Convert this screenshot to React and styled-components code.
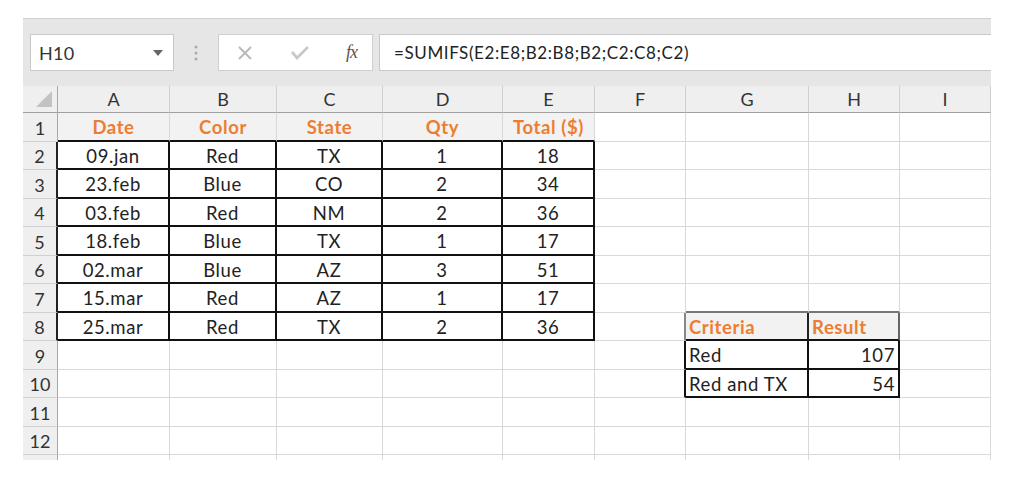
import styled, { createGlobalStyle } from 'styled-components'

const Global = createGlobalStyle`
    body {
        margin: 0;
        background: #fff;
        font-family: Lato, "Open Sans", sans-serif;
    }
`

const Page = styled.div`
    padding: 18px 0 0 23px;
`

const Sheet = styled.div`
    width: 968px;
    background: #e6e6e6;
    border-top: 1px solid #d0d0d0;
`

const Toolbar = styled.div`
    display: flex;
    align-items: center;
    height: 67px;
    padding: 0 0 0 7px;
`

const NameBox = styled.div`
    width: 144px;
    height: 37px;
    box-sizing: border-box;
    background: #fff;
    border: 1px solid #c9c9c9;
    display: flex;
    align-items: center;
    justify-content: space-between;
    padding: 0 10px 0 8px;
    font-size: 18px;
    letter-spacing: 0.3px;
    color: #333;
`

const Dots = styled.div`
    width: 44px;
    display: flex;
    justify-content: center;
`

const IconBox = styled.div`
    width: 155px;
    height: 37px;
    box-sizing: border-box;
    background: #fff;
    border: 1px solid #cfcfcf;
    display: flex;
    align-items: center;
    justify-content: space-between;
    padding: 0 15px 0 18px;
    margin-right: 6px;
`

const Fx = styled.span`
    font-family: "Liberation Serif", serif;
    font-style: italic;
    font-size: 18px;
    color: #555;
    letter-spacing: -1px;
`

const Formula = styled.div`
    flex: 1;
    height: 37px;
    box-sizing: border-box;
    background: #fff;
    border: 1px solid #c9c9c9;
    border-right: none;
    display: flex;
    align-items: center;
    padding-left: 14px;
    font-size: 17px;
    letter-spacing: 0.6px;
    color: #222;
`

const Grid = styled.div`
    display: grid;
    grid-template-columns: 35px 112px 107px 106px 120px 92px 91px 123px 91px 91px;
    grid-template-rows: 27px repeat(12, 28.5px) 5px;
    background: #fff;
`

const Cell = styled.div`
    box-sizing: border-box;
    display: flex;
    align-items: center;
    justify-content: ${p => p.$align || 'center'};
    padding: 2px 3px 0;
    font-size: 18.5px;
    letter-spacing: 0.6px;
    color: #222;
    white-space: nowrap;
    background: ${p => p.$fill || '#fff'};
    border-right: ${p => p.$r ? `2px solid ${p.$r}` : '1px solid #d9d9d9'};
    border-bottom: ${p => p.$b ? `2px solid ${p.$b}` : p.$last ? 'none' : '1px solid #d9d9d9'};
    font-weight: ${p => p.$bold ? 700 : 400};
    ${p => p.$bold && 'color: #ed7d31;'}
`

const HeadCell = styled.div`
    box-sizing: border-box;
    display: flex;
    align-items: center;
    justify-content: center;
    background: #efefef;
    font-size: 18px;
    color: #333;
    border-right: 1px solid ${p => p.$corner ? '#a8a8a8' : '#cfcfcf'};
    border-bottom: 1px solid #a0a0a0;
`

const RowHead = styled.div`
    box-sizing: border-box;
    display: flex;
    align-items: center;
    justify-content: center;
    padding-top: 2px;
    background: #efefef;
    font-size: 18px;
    color: #333;
    border-right: ${p => p.$dark ? '2px solid #222' : '1px solid #a8a8a8'};
    border-bottom: ${p => p.$last ? 'none' : '1px solid #d0d0d0'};
`

const Corner = styled(HeadCell)`
    align-items: flex-end;
    justify-content: flex-end;
    padding: 0 5px 5px 0;
`

const cols = ['A', 'B', 'C', 'D', 'E', 'F', 'G', 'H', 'I']

const table = [
    ['Date', 'Color', 'State', 'Qty', 'Total ($)'],
    ['09.jan', 'Red', 'TX', '1', '18'],
    ['23.feb', 'Blue', 'CO', '2', '34'],
    ['03.feb', 'Red', 'NM', '2', '36'],
    ['18.feb', 'Blue', 'TX', '1', '17'],
    ['02.mar', 'Blue', 'AZ', '3', '51'],
    ['15.mar', 'Red', 'AZ', '1', '17'],
    ['25.mar', 'Red', 'TX', '2', '36'],
]

const side = {
    8: ['Criteria', 'Result'],
    9: ['Red', '107'],
    10: ['Red and TX', '54'],
}

// border/fill rules for one cell, row is 1-based, col index 0..8
function cellProps(row, col) {
    const p = {}
    if (row === 1 && col < 5) {
        p.$fill = '#f2f2f2'
        p.$bold = true
        p.$b = '#111'
    }
    if (row >= 2 && row <= 8 && col < 5) {
        p.$r = '#111'
        p.$b = '#111'
    }
    if (row === 7 && (col === 6 || col === 7)) p.$b = '#777'
    if (col === 5 && row === 8) p.$r = '#888'
    if (col === 5 && (row === 9 || row === 10)) p.$r = '#111'
    if (row === 8 && (col === 6 || col === 7)) {
        p.$fill = '#f2f2f2'
        p.$bold = true
        p.$align = 'flex-start'
        p.$r = col === 6 ? '#222' : '#666'
        p.$b = '#111'
    }
    if ((row === 9 || row === 10) && (col === 6 || col === 7)) {
        p.$r = '#111'
        p.$b = '#111'
        p.$align = col === 6 ? 'flex-start' : 'flex-end'
    }
    return p
}

function cellText(row, col) {
    if (row <= 8 && col < 5) return table[row - 1][col]
    if (side[row] && (col === 6 || col === 7)) return side[row][col - 6]
    return ''
}

export default function App() {
    const rows = Array.from({ length: 13 }, (_, i) => i + 1)

    return (
        <Page>
            <Global />
            <Sheet>
                <Toolbar>
                    <NameBox>
                        H10
                        <svg width="10" height="6" viewBox="0 0 10 6">
                            <path d="M0 0 L10 0 L5 6 Z" fill="#666" />
                        </svg>
                    </NameBox>
                    <Dots>
                        <svg width="4" height="16" viewBox="0 0 4 16">
                            <circle cx="2" cy="2" r="1.5" fill="#aaa" />
                            <circle cx="2" cy="8" r="1.5" fill="#aaa" />
                            <circle cx="2" cy="14" r="1.5" fill="#aaa" />
                        </svg>
                    </Dots>
                    <IconBox>
                        <svg width="16" height="16" viewBox="0 0 16 16">
                            <path d="M2 2 L14 14 M14 2 L2 14" stroke="#b8b8b8" strokeWidth="1.8" />
                        </svg>
                        <svg width="18" height="16" viewBox="0 0 18 16">
                            <path d="M1 7 L6 13 L17 2" stroke="#c8c8c8" strokeWidth="2.8" fill="none" />
                        </svg>
                        <Fx>fx</Fx>
                    </IconBox>
                    <Formula>=SUMIFS(E2:E8;B2:B8;B2;C2:C8;C2)</Formula>
                </Toolbar>
                <Grid>
                    <Corner $corner>
                        <svg width="16" height="16" viewBox="0 0 16 16">
                            <path d="M16 0 L16 16 L0 16 Z" fill="#c2c2c2" />
                        </svg>
                    </Corner>
                    {cols.map(c => <HeadCell key={c}>{c}</HeadCell>)}
                    {rows.map(r => {
                        const last = r === 13
                        return [
                            <RowHead key={'h' + r} $last={last} $dark={r >= 2 && r <= 8}>
                                {last ? '' : r}
                            </RowHead>,
                            ...cols.map((c, ci) => (
                                <Cell key={c + r} $last={last} {...(last ? {} : cellProps(r, ci))}>
                                    {last ? '' : cellText(r, ci)}
                                </Cell>
                            )),
                        ]
                    })}
                </Grid>
            </Sheet>
        </Page>
    )
}
